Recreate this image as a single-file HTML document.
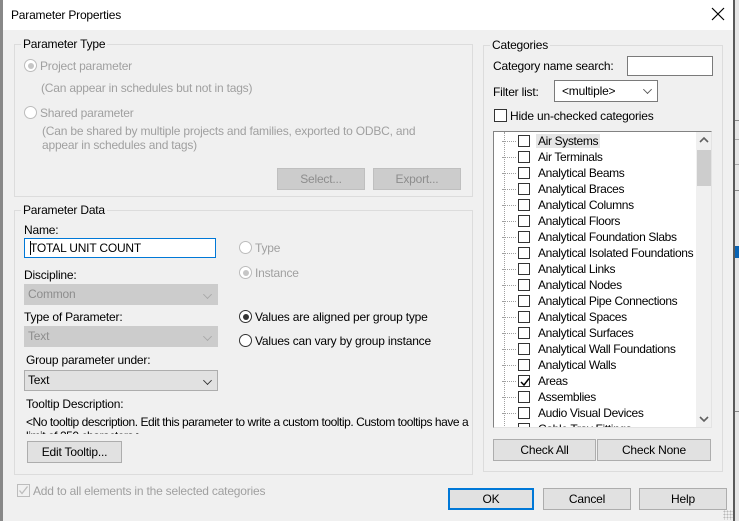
<!DOCTYPE html>
<html><head><meta charset="utf-8"><style>
*{box-sizing:border-box;margin:0;padding:0}
body{width:739px;height:521px;overflow:hidden;background:#f0f0f0;font-family:"Liberation Sans",sans-serif;font-size:12px;letter-spacing:-0.2px;color:#000;position:relative}
.a{position:absolute;white-space:nowrap}
.g{color:#a0a0a0}
.grp{position:absolute;border:1px solid #dcdcdc}
.lg{position:absolute;background:#f0f0f0;padding:0 2px;top:-8px;left:6px}
.btn{position:absolute;background:#e1e1e1;border:1px solid #adadad;text-align:center;line-height:20px}
.btn.d{background:#cccccc;border-color:#bfbfbf;color:#8d8d8d}
.rad{position:absolute;width:13px;height:13px;border-radius:50%;border:1px solid #333;background:#fff}
.rad.d{border-color:#bcbcbc}
.dot{position:absolute;left:2.5px;top:2.5px;width:6px;height:6px;border-radius:50%;background:#333}
.rad.d .dot{background:#c6c6c6}
.combo{position:absolute;border:1px solid #adadad;background:#e1e1e1;height:21px;line-height:19px;padding-left:3px}
.combo.d{background:#cccccc;border-color:#cccccc;color:#8d8d8d}
.chev{position:absolute;right:6px;top:6px;width:7px;height:7px;border-right:1px solid #333;border-bottom:1px solid #333;transform:rotate(45deg) scale(.9)}
.combo.d .chev{border-color:#a8a8a8}
.row{position:absolute;left:0;height:16px;width:200px}
.cb{position:absolute;left:24px;top:2px;width:12px;height:12px;border:1px solid #333;background:#fff}
.hl{position:absolute;left:8px;top:8px;width:14px;border-top:1px dotted #a0a0a0}
.rt{position:absolute;left:44px;top:1px;line-height:14px;letter-spacing:-0.35px}
</style></head><body>
<div class="a" style="left:733px;top:0;width:6px;height:521px;background:#e6e6e6"></div>
<div class="a" style="left:733px;top:120px;width:6px;height:1px;background:#888"></div>
<div class="a" style="left:733px;top:139px;width:6px;height:1px;background:#aaa"></div>
<div class="a" style="left:733px;top:164px;width:6px;height:1px;background:#aaa"></div>
<div class="a" style="left:733px;top:190px;width:6px;height:1px;background:#888"></div>
<div class="a" style="left:733px;top:246px;width:6px;height:12px;background:#0a64b4"></div>
<div class="a" style="left:733px;top:411px;width:6px;height:1px;background:#888"></div>
<div class="a" style="left:733px;top:0;width:2px;height:521px;background:#5a5a5a"></div>
<div class="a" style="left:0;top:0;width:3px;height:521px;background:#888"></div>
<div class="a" style="left:3px;top:0;width:730px;height:30px;background:#fff"></div>
<div class="a" style="left:11px;top:8px;font-size:12px">Parameter Properties</div>
<svg class="a" style="left:711px;top:7px" width="14" height="14"><path d="M1 1L13 13M13 1L1 13" stroke="#000" stroke-width="1.2"/></svg>

<div class="grp" style="left:14px;top:44px;width:459px;height:153px"><div class="lg">Parameter Type</div></div>
<div class="rad d" style="left:24px;top:59px"><div class="dot"></div></div>
<div class="a g" style="left:40px;top:59px">Project parameter</div>
<div class="a g" style="left:41px;top:81px">(Can appear in schedules but not in tags)</div>
<div class="rad d" style="left:24px;top:106px"></div>
<div class="a g" style="left:40px;top:106px">Shared parameter</div>
<div class="a g" style="left:42px;top:124px;line-height:14px">(Can be shared by multiple projects and families, exported to ODBC, and<br>appear in schedules and tags)</div>
<div class="btn d" style="left:277px;top:168px;width:88px;height:22px">Select...</div>
<div class="btn d" style="left:373px;top:168px;width:88px;height:22px">Export...</div>

<div class="grp" style="left:14px;top:210px;width:459px;height:265px"><div class="lg">Parameter Data</div></div>
<div class="a" style="left:24px;top:223px">Name:</div>
<div class="a" style="left:24px;top:238px;width:192px;height:20px;background:#fff;border:1px solid #0078d7;padding-left:5px;line-height:18px">TOTAL UNIT COUNT</div>
<div class="a" style="left:30px;top:241px;width:1px;height:14px;background:#000"></div>
<div class="a" style="left:24px;top:268px">Discipline:</div>
<div class="combo d" style="left:24px;top:284px;width:194px">Common<div class="chev"></div></div>
<div class="a" style="left:24px;top:310px">Type of Parameter:</div>
<div class="combo d" style="left:24px;top:326px;width:194px">Text<div class="chev"></div></div>
<div class="a" style="left:26px;top:353px">Group parameter under:</div>
<div class="combo" style="left:24px;top:370px;width:194px">Text<div class="chev"></div></div>
<div class="rad d" style="left:239px;top:241px"></div>
<div class="a g" style="left:255px;top:241px">Type</div>
<div class="rad d" style="left:239px;top:266px"><div class="dot"></div></div>
<div class="a g" style="left:255px;top:266px">Instance</div>
<div class="rad" style="left:239px;top:310px"><div class="dot"></div></div>
<div class="a" style="left:255px;top:310px">Values are aligned per group type</div>
<div class="rad" style="left:239px;top:334px"></div>
<div class="a" style="left:255px;top:334px">Values can vary by group instance</div>
<div class="a" style="left:26px;top:397px">Tooltip Description:</div>
<div class="a" style="left:26px;top:415px;width:460px;height:19px;overflow:hidden;line-height:14px;letter-spacing:-0.45px">&lt;No tooltip description. Edit this parameter to write a custom tooltip. Custom tooltips have a<br>limit of 250 characters.&gt;</div>
<div class="btn" style="left:27px;top:441px;width:95px;height:22px">Edit Tooltip...</div>

<div class="a" style="left:17px;top:484px;width:13px;height:13px;border:1px solid #bcbcbc;background:#f0f0f0"></div>
<svg class="a" style="left:18px;top:485px" width="11" height="11"><path d="M1.5 5.5L4 8.5L9.5 1.5" stroke="#bcbcbc" stroke-width="1.3" fill="none"/></svg>
<div class="a g" style="left:33px;top:484px">Add to all elements in the selected categories</div>
<div class="btn" style="left:448px;top:488px;width:86px;height:22px;border:2px solid #0078d7;line-height:18px">OK</div>
<div class="btn" style="left:543px;top:488px;width:88px;height:22px">Cancel</div>
<div class="btn" style="left:639px;top:488px;width:88px;height:22px">Help</div>

<div class="grp" style="left:483px;top:45px;width:240px;height:427px"><div class="lg">Categories</div></div>
<div class="a" style="left:493px;top:59px">Category name search:</div>
<div class="a" style="left:627px;top:56px;width:86px;height:20px;background:#fff;border:1px solid #7a7a7a"></div>
<div class="a" style="left:493px;top:85px">Filter list:</div>
<div class="a" style="left:554px;top:80px;width:104px;height:22px;background:#fff;border:1px solid #7a7a7a;line-height:20px;padding-left:7px">&lt;multiple&gt;<div class="chev" style="border-color:#555;top:5px"></div></div>
<div class="a" style="left:494px;top:109px;width:13px;height:13px;border:1px solid #333;background:#fff"></div>
<div class="a" style="left:510px;top:109px">Hide un-checked categories</div>

<div class="a" style="left:493px;top:131px;width:219px;height:297px;background:#fff;border:1px solid #828282;border-right-color:#e3e3e3;border-bottom-color:#e3e3e3;overflow:hidden">
 <div class="a" style="left:10px;top:0;height:300px;border-left:1px dotted #a0a0a0"></div>
 <div id="rows"></div>
 <div class="a" style="left:202px;top:0;width:16px;height:296px;background:#f0f0f0"></div>
 <div class="a" style="left:203px;top:18px;width:14px;height:36px;background:#cdcdcd"></div>
 <svg class="a" style="left:205px;top:4px" width="10" height="8"><path d="M1 6L5 2L9 6" stroke="#606060" stroke-width="1.6" fill="none"/></svg>
 <svg class="a" style="left:205px;top:283px" width="10" height="8"><path d="M1 2L5 6L9 2" stroke="#606060" stroke-width="1.6" fill="none"/></svg>
</div>
<div class="btn" style="left:493px;top:439px;width:103px;height:22px">Check All</div>
<div class="btn" style="left:597px;top:439px;width:114px;height:22px">Check None</div>
<div class="a" style="left:723px;top:510px;width:10px;height:10px;background:radial-gradient(circle,#b8b8b8 0.8px,transparent 1px) 0 0/3px 3px"></div>

<script>
var n=["Air Systems","Air Terminals","Analytical Beams","Analytical Braces","Analytical Columns","Analytical Floors","Analytical Foundation Slabs","Analytical Isolated Foundations","Analytical Links","Analytical Nodes","Analytical Pipe Connections","Analytical Spaces","Analytical Surfaces","Analytical Wall Foundations","Analytical Walls","Areas","Assemblies","Audio Visual Devices","Cable Tray Fittings"];
var h="";
n.forEach(function(t,i){
 var top=1+16*i;
 var chk=t=="Areas"?'<svg style="position:absolute;left:1px;top:1px" width="10" height="10"><path d="M1 5L4 8L9 1.5" stroke="#000" stroke-width="1.5" fill="none"/></svg>':'';
 var hl=i==0?'background:#e5e5e5;padding:0 2px;margin-left:-2px;':'';
 h+='<div class="row" style="top:'+top+'px"><div class="hl"></div><div class="cb">'+chk+'</div><div class="rt" style="'+hl+'">'+t+'</div></div>';
});
document.getElementById("rows").innerHTML=h;
</script>
</body></html>
